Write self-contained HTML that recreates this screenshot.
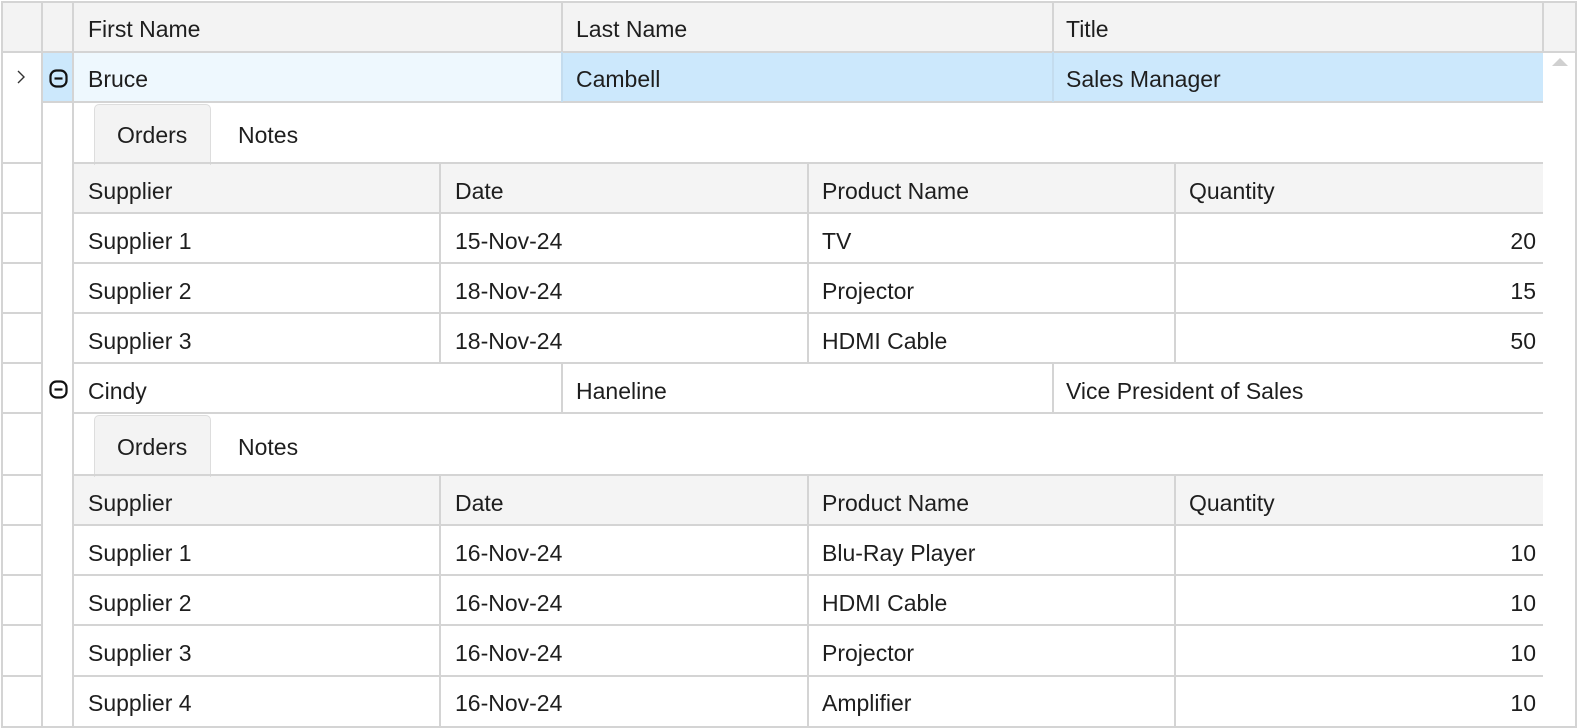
<!DOCTYPE html><html><head><style>
body{margin:0;width:1580px;height:728px;background:#fff;position:relative;overflow:hidden;font-family:"Liberation Sans",sans-serif;font-size:23px;color:#1e1e1e}
div{position:absolute;box-sizing:border-box}
.h{height:2px;background:#d4d4d4}
.v{width:2px;background:#d4d4d4}
.t{line-height:50px;white-space:nowrap}
.r{text-align:right}
</style></head><body>
<div style="left:2px;top:2px;width:1573px;height:50px;background:#f3f3f3"></div>
<div style="left:42px;top:52px;width:31px;height:50px;background:#cce8fc"></div>
<div style="left:73px;top:52px;width:489px;height:50px;background:#eef8fe"></div>
<div style="left:562px;top:52px;width:981px;height:50px;background:#cce8fc"></div>
<div style="left:73px;top:163px;width:1470px;height:50px;background:#f4f4f4"></div>
<div style="left:73px;top:475px;width:1470px;height:50px;background:#f4f4f4"></div>
<div style="left:94px;top:104px;width:117px;height:61px;background:#f3f3f3;border:1px solid #ddd;border-bottom:none;border-radius:5px 5px 0 0"></div>
<div style="left:94px;top:415px;width:117px;height:62px;background:#f3f3f3;border:1px solid #ddd;border-bottom:none;border-radius:5px 5px 0 0"></div>
<div style="left:1px;top:1px;width:1576px;height:727px;border:2px solid #d4d4d4"></div>
<div class="h" style="left:2px;top:51px;width:1573px"></div>
<div class="v" style="left:41px;top:2px;height:724px"></div>
<div class="v" style="left:72px;top:2px;height:724px"></div>
<div class="v" style="left:561px;top:2px;height:50px"></div>
<div class="v" style="left:1052px;top:2px;height:50px"></div>
<div class="v" style="left:1542px;top:2px;height:50px"></div>
<div class="h" style="left:41px;top:101px;width:1502px"></div>
<div class="v" style="left:561px;top:52px;height:50px;background:#c4dcee"></div>
<div class="v" style="left:1052px;top:52px;height:50px;background:#c4dcee"></div>
<div class="v" style="left:561px;top:363px;height:50px"></div>
<div class="v" style="left:1052px;top:363px;height:50px"></div>
<div class="h" style="left:72px;top:412px;width:1471px"></div>
<div class="h" style="left:2px;top:162px;width:40px"></div>
<div class="h" style="left:2px;top:212px;width:40px"></div>
<div class="h" style="left:2px;top:262px;width:40px"></div>
<div class="h" style="left:2px;top:312px;width:40px"></div>
<div class="h" style="left:2px;top:362px;width:40px"></div>
<div class="h" style="left:2px;top:412px;width:40px"></div>
<div class="h" style="left:2px;top:474px;width:40px"></div>
<div class="h" style="left:2px;top:524px;width:40px"></div>
<div class="h" style="left:2px;top:574px;width:40px"></div>
<div class="h" style="left:2px;top:624px;width:40px"></div>
<div class="h" style="left:2px;top:675px;width:40px"></div>
<div class="h" style="left:72px;top:162px;width:1471px"></div>
<div class="h" style="left:72px;top:212px;width:1471px"></div>
<div class="h" style="left:72px;top:262px;width:1471px"></div>
<div class="h" style="left:72px;top:312px;width:1471px"></div>
<div class="h" style="left:72px;top:362px;width:1471px"></div>
<div class="v" style="left:439px;top:163px;height:200px"></div>
<div class="v" style="left:807px;top:163px;height:200px"></div>
<div class="v" style="left:1174px;top:163px;height:200px"></div>
<div class="h" style="left:72px;top:474px;width:1471px"></div>
<div class="h" style="left:72px;top:524px;width:1471px"></div>
<div class="h" style="left:72px;top:574px;width:1471px"></div>
<div class="h" style="left:72px;top:624px;width:1471px"></div>
<div class="h" style="left:72px;top:675px;width:1471px"></div>
<div class="v" style="left:439px;top:475px;height:251px"></div>
<div class="v" style="left:807px;top:475px;height:251px"></div>
<div class="v" style="left:1174px;top:475px;height:251px"></div>
<div style="left:1552px;top:58px;width:0;height:0;border-left:8px solid transparent;border-right:8px solid transparent;border-bottom:8px solid #d0d0d0"></div>
<svg style="position:absolute;left:15px;top:69px" width="12" height="16"><path d="M3 2 L9 8 L3 14" fill="none" stroke="#333" stroke-width="1.4"/></svg>
<svg style="position:absolute;left:49px;top:69px" width="19" height="19"><rect x="1.5" y="1.5" width="16" height="16" rx="6" fill="none" stroke="#111" stroke-width="2.2"/><path d="M5.5 9.5h8" stroke="#111" stroke-width="2.2"/></svg>
<svg style="position:absolute;left:49px;top:380px" width="19" height="19"><rect x="1.5" y="1.5" width="16" height="16" rx="6" fill="none" stroke="#111" stroke-width="2.2"/><path d="M5.5 9.5h8" stroke="#111" stroke-width="2.2"/></svg>
<div class="t" style="left:88px;top:4px">First Name</div>
<div class="t" style="left:576px;top:4px">Last Name</div>
<div class="t" style="left:1066px;top:4px">Title</div>
<div class="t" style="left:88px;top:54px">Bruce</div>
<div class="t" style="left:576px;top:54px">Cambell</div>
<div class="t" style="left:1066px;top:54px">Sales Manager</div>
<div class="t" style="left:117px;top:110px">Orders</div>
<div class="t" style="left:238px;top:110px">Notes</div>
<div class="t" style="left:88px;top:166px">Supplier</div>
<div class="t" style="left:455px;top:166px">Date</div>
<div class="t" style="left:822px;top:166px">Product Name</div>
<div class="t" style="left:1189px;top:166px">Quantity</div>
<div class="t" style="left:88px;top:216px">Supplier 1</div><div class="t" style="left:455px;top:216px">15-Nov-24</div><div class="t" style="left:822px;top:216px">TV</div><div class="t r" style="left:1180px;width:356px;top:216px">20</div>
<div class="t" style="left:88px;top:266px">Supplier 2</div><div class="t" style="left:455px;top:266px">18-Nov-24</div><div class="t" style="left:822px;top:266px">Projector</div><div class="t r" style="left:1180px;width:356px;top:266px">15</div>
<div class="t" style="left:88px;top:316px">Supplier 3</div><div class="t" style="left:455px;top:316px">18-Nov-24</div><div class="t" style="left:822px;top:316px">HDMI Cable</div><div class="t r" style="left:1180px;width:356px;top:316px">50</div>
<div class="t" style="left:88px;top:366px">Cindy</div>
<div class="t" style="left:576px;top:366px">Haneline</div>
<div class="t" style="left:1066px;top:366px">Vice President of Sales</div>
<div class="t" style="left:117px;top:422px">Orders</div>
<div class="t" style="left:238px;top:422px">Notes</div>
<div class="t" style="left:88px;top:478px">Supplier</div>
<div class="t" style="left:455px;top:478px">Date</div>
<div class="t" style="left:822px;top:478px">Product Name</div>
<div class="t" style="left:1189px;top:478px">Quantity</div>
<div class="t" style="left:88px;top:528px">Supplier 1</div><div class="t" style="left:455px;top:528px">16-Nov-24</div><div class="t" style="left:822px;top:528px">Blu-Ray Player</div><div class="t r" style="left:1180px;width:356px;top:528px">10</div>
<div class="t" style="left:88px;top:578px">Supplier 2</div><div class="t" style="left:455px;top:578px">16-Nov-24</div><div class="t" style="left:822px;top:578px">HDMI Cable</div><div class="t r" style="left:1180px;width:356px;top:578px">10</div>
<div class="t" style="left:88px;top:628px">Supplier 3</div><div class="t" style="left:455px;top:628px">16-Nov-24</div><div class="t" style="left:822px;top:628px">Projector</div><div class="t r" style="left:1180px;width:356px;top:628px">10</div>
<div class="t" style="left:88px;top:678px">Supplier 4</div><div class="t" style="left:455px;top:678px">16-Nov-24</div><div class="t" style="left:822px;top:678px">Amplifier</div><div class="t r" style="left:1180px;width:356px;top:678px">10</div>
</body></html>
